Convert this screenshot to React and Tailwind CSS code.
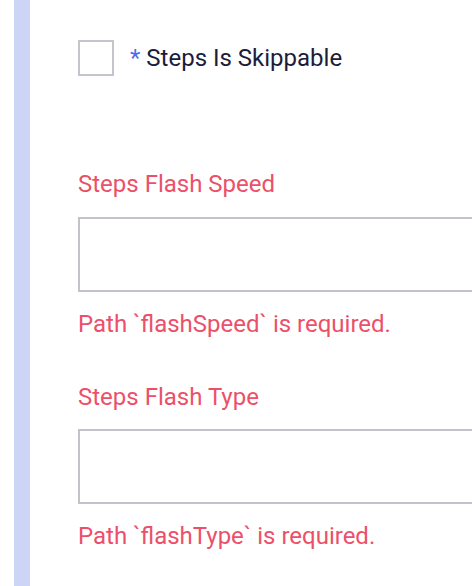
export default function App() {
  const font = { fontFamily: 'Roboto, "Liberation Sans", sans-serif' };
  return (
    <div className="flex h-[586px] w-[472px] overflow-hidden bg-white" style={font}>
      <div className="w-[14px] shrink-0 bg-white" />
      <div className="w-[16px] shrink-0 bg-[#cdd5f7]" />
      <div className="flex flex-col pl-[48px] pt-[40px] w-[600px] shrink-0">
        <label className="flex items-center h-[36px]">
          <span className="w-[36px] h-[36px] border-2 border-[#c4c4cc] bg-white shrink-0" />
          <span className="ml-[16px] text-[24px] leading-[28px] text-[#1c1c3a]">
            <span className="text-[#4a6cf0] mr-[6px]">*</span>Steps Is Skippable
          </span>
        </label>

        <div className="mt-[94px] text-[24px] leading-[28px] text-[#ec5069]">Steps Flash Speed</div>
        <div className="mt-[19px] h-[75px] w-[500px] border-2 border-[#c2c2ca] bg-white" />
        <div className="mt-[18px] text-[24px] leading-[28px] text-[#ec5069]">Path `flashSpeed` is required.</div>

        <div className="mt-[45px] text-[24px] leading-[28px] text-[#ec5069]">Steps Flash Type</div>
        <div className="mt-[18px] h-[75px] w-[500px] border-2 border-[#c2c2ca] bg-white" />
        <div className="mt-[18px] text-[24px] leading-[28px] text-[#ec5069]">Path `flashType` is required.</div>
      </div>
    </div>
  );
}
